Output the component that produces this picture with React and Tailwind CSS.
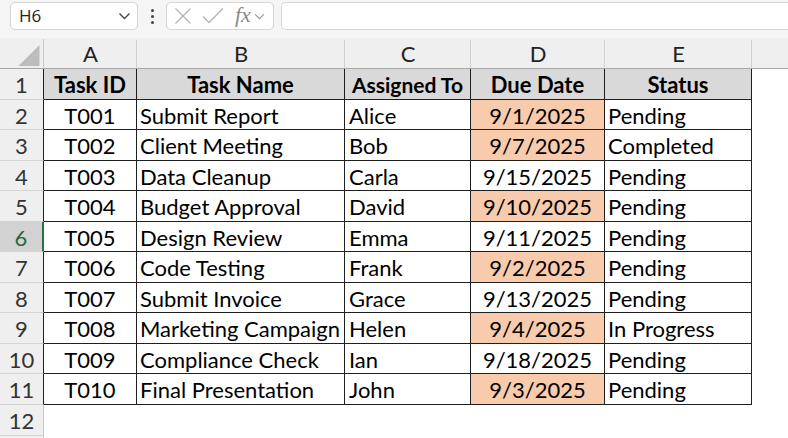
import React from "react";

const rows = [
  ["T001", "Submit Report", "Alice", "9/1/2025", "Pending", true],
  ["T002", "Client Meeting", "Bob", "9/7/2025", "Completed", true],
  ["T003", "Data Cleanup", "Carla", "9/15/2025", "Pending", false],
  ["T004", "Budget Approval", "David", "9/10/2025", "Pending", true],
  ["T005", "Design Review", "Emma", "9/11/2025", "Pending", false],
  ["T006", "Code Testing", "Frank", "9/2/2025", "Pending", true],
  ["T007", "Submit Invoice", "Grace", "9/13/2025", "Pending", false],
  ["T008", "Marketing Campaign", "Helen", "9/4/2025", "In Progress", true],
  ["T009", "Compliance Check", "Ian", "9/18/2025", "Pending", false],
  ["T010", "Final Presentation", "John", "9/3/2025", "Pending", true],
];

const cellFont = { fontFamily: "Lato, 'Open Sans', sans-serif" };

function Chevron({ className }) {
  return (
    <svg viewBox="0 0 12 8" className={className} fill="none" stroke="currentColor" strokeWidth="1.4">
      <path d="M1 1.5 L6 6.5 L11 1.5" />
    </svg>
  );
}

function ColHeader({ label, w }) {
  return (
    <div className={`${w} h-full flex items-center justify-center relative text-[22px] text-[#222] pt-[1px]`}>
      {label}
      <div className="absolute right-0 top-[2px] bottom-0 w-px bg-[#d0d0d0]" />
    </div>
  );
}

export default function App() {
  return (
    <div className="w-[788px] h-[438px] overflow-hidden bg-white relative" style={cellFont}>
      {/* top bar */}
      <div className="h-[38px] bg-[#f5f5f5] flex items-start pt-[2px] pl-[10px]">
        <div className="w-[128px] h-[28px] bg-white border border-[#d6d6d6] rounded-[5px] flex items-center justify-between pl-[8px] pr-[6px]">
          <span className="text-[17px] text-[#222]" style={{ fontFamily: "'Open Sans', 'Liberation Sans', sans-serif" }}>H6</span>
          <Chevron className="w-[13px] h-[8px] text-[#444]" />
        </div>
        <div className="w-[28px] h-[28px] flex flex-col items-center justify-center gap-[3px]">
          <span className="w-[3px] h-[3px] rounded-full bg-[#444]" />
          <span className="w-[3px] h-[3px] rounded-full bg-[#444]" />
          <span className="w-[3px] h-[3px] rounded-full bg-[#444]" />
        </div>
        <div className="w-[108px] h-[28px] bg-white border border-[#d6d6d6] rounded-[5px] flex items-center pl-[6px] gap-[9px]">
          <svg viewBox="0 0 20 20" className="w-[20px] h-[20px]" fill="none" stroke="#b5b5b5" strokeWidth="1.3">
            <path d="M2.5 2.5 L17.5 17.5 M17.5 2.5 L2.5 17.5" />
          </svg>
          <svg viewBox="0 0 22 18" className="w-[22px] h-[18px]" fill="none" stroke="#b5b5b5" strokeWidth="1.3">
            <path d="M1 9.5 L7 15.5 L21 1.5" />
          </svg>
          <div className="flex items-center gap-[3px] ml-[2px]">
            <span className="text-[22px] italic text-[#8a8a8a] leading-none -mt-[2px]" style={{ fontFamily: "'Liberation Serif', serif" }}>fx</span>
            <Chevron className="w-[11px] h-[7px] text-[#999]" />
          </div>
        </div>
        <div className="ml-[7px] flex-1 h-[28px] bg-white border border-[#d6d6d6] rounded-l-[5px] border-r-0" />
      </div>

      {/* column header row */}
      <div className="h-[31px] bg-[#efefef] border-b border-[#a8a8a8] flex">
        <div className="w-[44px] h-full relative">
          <div className="absolute right-0 top-[1px] bottom-0 w-px bg-[#c8c8c8]" />
          <svg viewBox="0 0 22 22" className="absolute left-[18px] top-[7px] w-[22px] h-[21px]">
            <path d="M22 0 L22 22 L0 22 Z" fill="#bdbdbd" />
          </svg>
        </div>
        <ColHeader label="A" w="w-[93px]" />
        <ColHeader label="B" w="w-[208px]" />
        <ColHeader label="C" w="w-[126px]" />
        <ColHeader label="D" w="w-[134px]" />
        <ColHeader label="E" w="w-[147px]" />
        <div className="flex-1" />
      </div>

      {/* header data row */}
      <div className="h-[31px] flex">
        <div className="w-[44px] bg-[#efefef] border-r border-[#1f1f1f] border-b border-b-[#d4d4d4] flex items-center justify-center text-[22px] text-[#333] pt-[1px]">1</div>
        <div className="w-[93px] bg-[#d9d9d9] border-r border-b border-[#1f1f1f] flex items-center justify-center text-[22px] font-bold text-black pt-[1px]">Task ID</div>
        <div className="w-[208px] bg-[#d9d9d9] border-r border-b border-[#1f1f1f] flex items-center justify-center text-[22px] font-bold text-black pt-[1px]">Task Name</div>
        <div className="w-[126px] bg-[#d9d9d9] border-r border-b border-[#1f1f1f] flex items-center justify-center text-[21px] font-bold text-black whitespace-nowrap pt-[1px]">Assigned To</div>
        <div className="w-[134px] bg-[#d9d9d9] border-r border-b border-[#1f1f1f] flex items-center justify-center text-[22px] font-bold text-black pt-[1px]">Due Date</div>
        <div className="w-[147px] bg-[#d9d9d9] border-r border-b border-[#1f1f1f] flex items-center justify-center text-[22px] font-bold text-black pt-[1px]">Status</div>
        <div className="flex-1" />
      </div>

      {rows.map((r, i) => {
        const sel = i === 4;
        return (
          <div key={i} className={`${i % 2 === 0 ? "h-[30px]" : "h-[31px]"} flex`}>
            <div
              className={`w-[44px] border-b border-b-[#d4d4d4] flex items-center justify-center text-[22px] pt-[1px] ${
                sel ? "bg-[#d2d2d2] text-[#1e6b41] border-r-2 border-r-[#217346]" : "bg-[#efefef] text-[#333] border-r border-r-[#1f1f1f]"
              }`}
            >
              {i + 2}
            </div>
            <div className="w-[93px] border-r border-b border-[#1f1f1f] flex items-center justify-center text-[22px] text-black pt-[1px]">{r[0]}</div>
            <div className="w-[208px] border-r border-b border-[#1f1f1f] flex items-center pl-[3px] text-[22px] text-black whitespace-nowrap pt-[1px]">{r[1]}</div>
            <div className="w-[126px] border-r border-b border-[#1f1f1f] flex items-center pl-[4px] text-[22px] text-black pt-[1px]">{r[2]}</div>
            <div className={`w-[134px] border-r border-b border-[#1f1f1f] flex items-center justify-center text-[22px] text-black pt-[1px] ${r[5] ? "bg-[#f8cbad]" : ""}`}>{r[3]}</div>
            <div className="w-[147px] border-r border-b border-[#1f1f1f] flex items-center pl-[3px] text-[22px] text-black whitespace-nowrap pt-[1px]">{r[4]}</div>
            <div className="flex-1" />
          </div>
        );
      })}

      <div className="h-[31px] flex">
        <div className="w-[44px] bg-[#efefef] border-r border-[#c8c8c8] border-b border-b-[#d4d4d4] flex items-center justify-center text-[22px] text-[#333] pt-[1px]">12</div>
        <div className="flex-1" />
      </div>
      <div className="h-[10px] flex">
        <div className="w-[44px] bg-[#efefef] border-r border-[#c8c8c8]" />
      </div>
    </div>
  );
}
